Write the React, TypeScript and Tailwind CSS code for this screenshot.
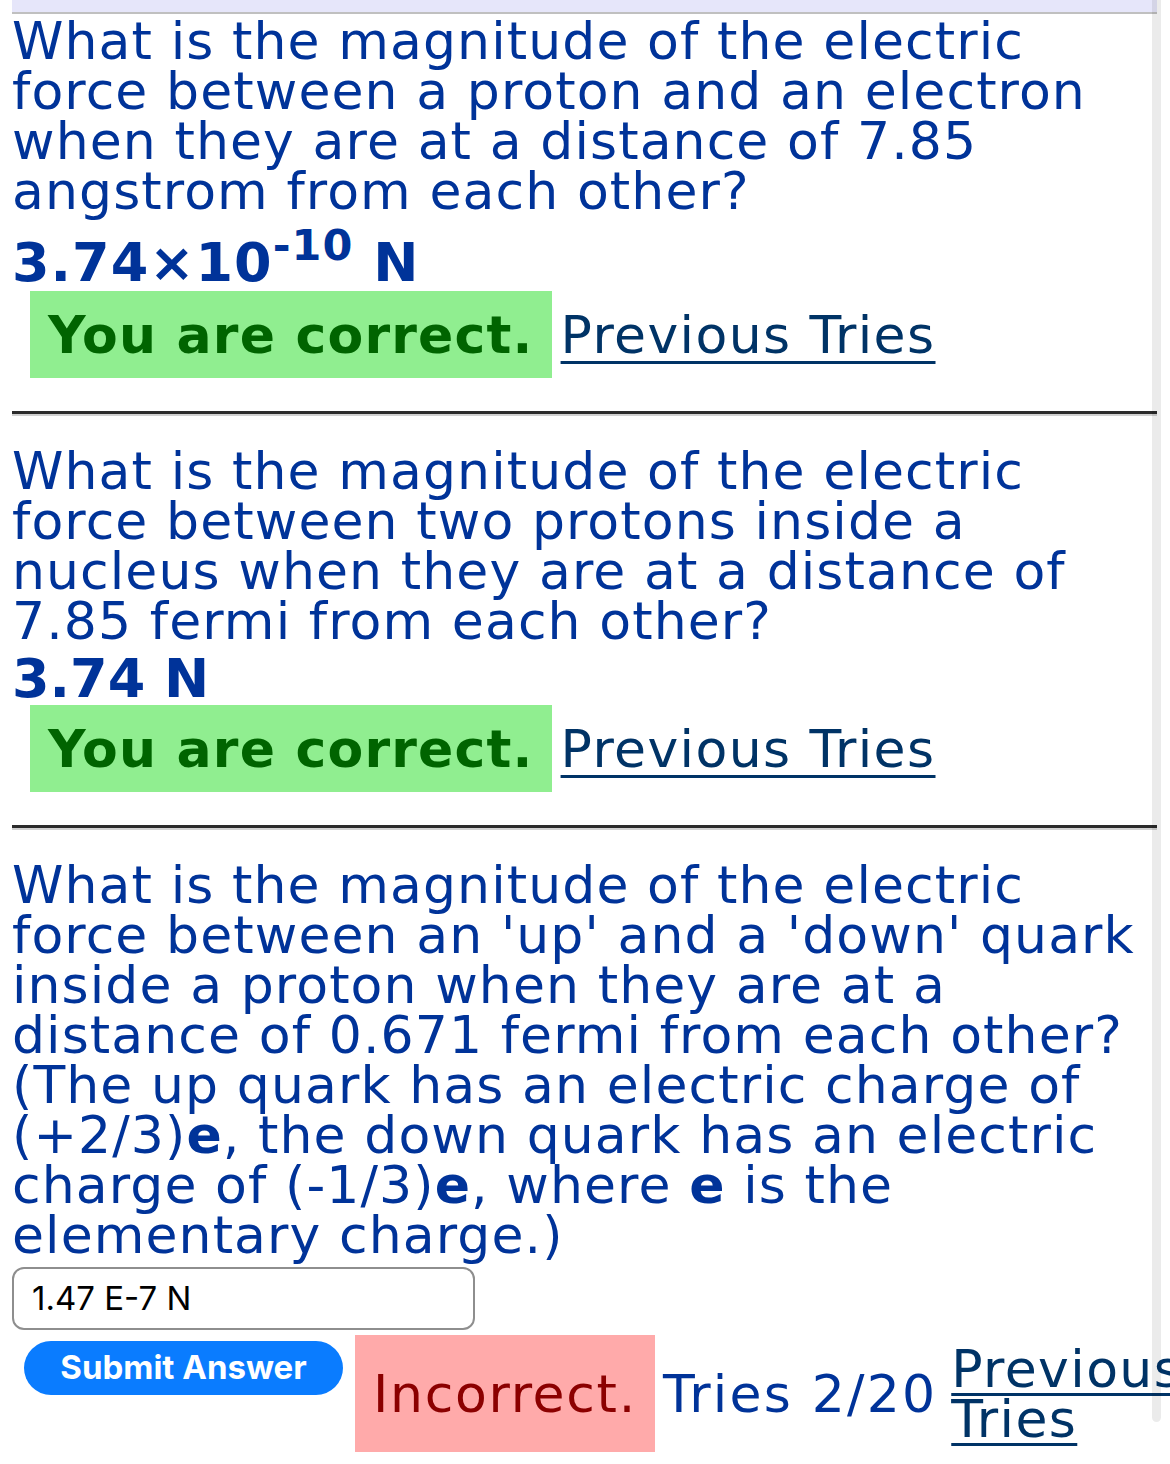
import React from "react";

const ink = "text-[#003399]";
const body = "text-[52px] leading-[50px] tracking-[1.1px]";

function Hr() {
  return (
    <div className="mt-[33px] mb-[30px]">
      <div className="h-[3px] bg-[#2b2b2b]" />
      <div className="h-[2px] bg-[#d0d0d0]" />
    </div>
  );
}

function Correct({ gap }: { gap: string }) {
  return (
    <div className={`${gap} ml-[18px] flex items-center`}>
      <div className="flex h-[87px] items-center bg-[#90ee90] px-[18px] text-[52px] font-bold leading-none tracking-[1.2px] text-[#006400]">
        You are correct.
      </div>
      <a
        href="#"
        className="ml-[9px] text-[52px] leading-none tracking-[1.4px] text-[#003366] underline decoration-[3px] underline-offset-[8px]"
      >
        Previous Tries
      </a>
    </div>
  );
}

export default function App() {
  return (
    <div
      className="relative min-h-[1464px] w-[1170px] overflow-hidden bg-white"
      style={{ fontFamily: '"DejaVu Sans", Verdana, sans-serif' }}
    >
      <div className="pl-[12px] pr-[13px]">
        <div className="h-[14px] border-b-2 border-[#c0c0c0] bg-[#e6e6fa]" />

        {/* question 1 */}
        <p className={`mt-[2px] ${body} ${ink}`}>
          What is the magnitude of the electric force between a proton and an
          electron when they are at a distance of 7.85 angstrom from each other?
        </p>
        <p className={`mt-[20px] text-[54px] font-bold leading-[54px] tracking-[1px] ${ink}`}>
          3.74×10<sup className="text-[43px]">-10</sup> N
        </p>
        <Correct gap="mt-[1px]" />
        <Hr />

        {/* question 2 */}
        <p className={`${body} ${ink}`}>
          What is the magnitude of the electric force between two protons inside
          a nucleus when they are at a distance of 7.85 fermi from each other?
        </p>
        <p className={`mt-[6px] text-[54px] font-bold leading-[54px] ${ink}`}>3.74 N</p>
        <Correct gap="-mt-[1px]" />
        <Hr />

        {/* question 3 */}
        <p className={`${body} ${ink}`}>
          What is the magnitude of the electric force between an 'up' and a
          'down' quark inside a proton when they are at a distance of 0.671
          fermi from each other? (The up quark has an electric charge of (+2/3)
          <b>e</b>, the down quark has an electric charge of (-1/3)<b>e</b>,
          where <b>e</b> is the elementary charge.)
        </p>
        <div
          className="mt-[7px] flex h-[63px] w-[463px] items-center rounded-[12px] border-2 border-[#8e8e8e] pl-[18px] text-[33px] text-black"
          style={{ fontFamily: 'Inter, "Liberation Sans", sans-serif' }}
        >
          1.47 E-7 N
        </div>
        <div className="mt-[5px] flex items-stretch">
          <button
            type="button"
            className="ml-[12px] mt-[6px] h-[54px] w-[319px] self-start rounded-full bg-[#0a7cff] text-[33px] font-bold text-white"
            style={{ fontFamily: 'Inter, "Liberation Sans", sans-serif' }}
          >
            Submit Answer
          </button>
          <div className="ml-[12px] flex h-[117px] items-center bg-[#ffaaaa] px-[18px] text-[52px] leading-none tracking-[1.7px] text-[#8b0000]">
            Incorrect.
          </div>
          <div className={`ml-[8px] flex items-center text-[52px] leading-none tracking-[2.2px] ${ink}`}>
            Tries 2/20
          </div>
          <div className="ml-[14px] flex w-[200px] items-center">
            <a
              href="#"
              className="text-[52px] leading-[50px] tracking-[1.4px] text-[#003366] underline decoration-[3px] underline-offset-[6px]"
            >
              Previous Tries
            </a>
          </div>
        </div>
      </div>

      {/* overlay scrollbar */}
      <div className="absolute right-[9px] top-0 h-[1422px] w-[9px] rounded-b-full bg-black/[0.08]" />
    </div>
  );
}
